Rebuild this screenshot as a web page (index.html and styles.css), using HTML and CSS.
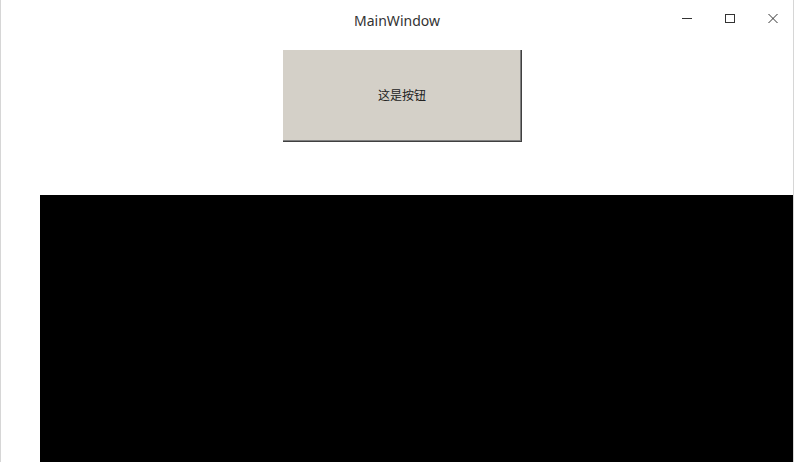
FILE: index.html
```html
<!DOCTYPE html>
<html lang="zh">
<head>
  <meta charset="utf-8">
  <title>MainWindow</title>
  <link rel="stylesheet" href="styles.css">
</head>
<body>
  <div class="window">
    <div class="titlebar">
      <span class="title">MainWindow</span>
      <div class="controls">
        <span class="ctl">
          <svg width="12" height="12" viewBox="0 0 12 12"><path d="M1 6.5h10" stroke="#333" stroke-width="1" fill="none"/></svg>
        </span>
        <span class="ctl">
          <svg width="12" height="12" viewBox="0 0 12 12"><rect x="1.5" y="2.5" width="9" height="8" stroke="#333" stroke-width="1" fill="none"/></svg>
        </span>
        <span class="ctl">
          <svg width="12" height="12" viewBox="0 0 12 12"><path d="M1.5 2l9 9M10.5 2l-9 9" stroke="#333" stroke-width="1" fill="none"/></svg>
        </span>
      </div>
    </div>
    <div class="content">
      <button class="push">这是按钮</button>
      <div class="canvas"></div>
    </div>
  </div>
</body>
</html>
```

FILE: styles.css
```css
/* ******************** global ******************* */

* {
  box-sizing: border-box;
}

html,
body {
  margin: 0;
  padding: 0;
  background: white;
  overflow: hidden;
}

.window {
  width: 794px;
  height: 462px;
  border-left: 1px solid #d6d6d6;
  border-right: 1px solid #d6d6d6;
  display: flex;
  flex-direction: column;
  font-family: "Noto Sans", "Noto Sans CJK SC", sans-serif;
}

/* ******************** titlebar ******************* */

.titlebar {
  position: relative;
  height: 40px;
  flex: none;
  display: flex;
  align-items: center;
  justify-content: center;
}

.title {
  font-size: 14px;
  color: #333;
}

.controls {
  position: absolute;
  right: 14px;
  top: 12px;
  display: flex;
  gap: 31px;
}

.ctl {
  width: 12px;
  height: 12px;
  display: block;
}

.ctl svg {
  display: block;
}

/* ******************** content ******************* */

.content {
  flex: 1;
  display: flex;
  flex-direction: column;
  align-items: flex-start;
}

.push {
  margin: 10px 0 0 282px;
  width: 239px;
  height: 92px;
  padding: 0 0 2px 0;
  background: #d4d0c8;
  border: none;
  border-right: 1px solid #404040;
  border-bottom: 1px solid #404040;
  box-shadow: inset -1px -1px 0 #808080;
  font-family: "Noto Sans CJK SC", sans-serif;
  font-size: 12px;
  color: #222;
}

.canvas {
  margin: 53px 0 0 39px;
  align-self: stretch;
  flex: 1;
  background: black;
}
```
